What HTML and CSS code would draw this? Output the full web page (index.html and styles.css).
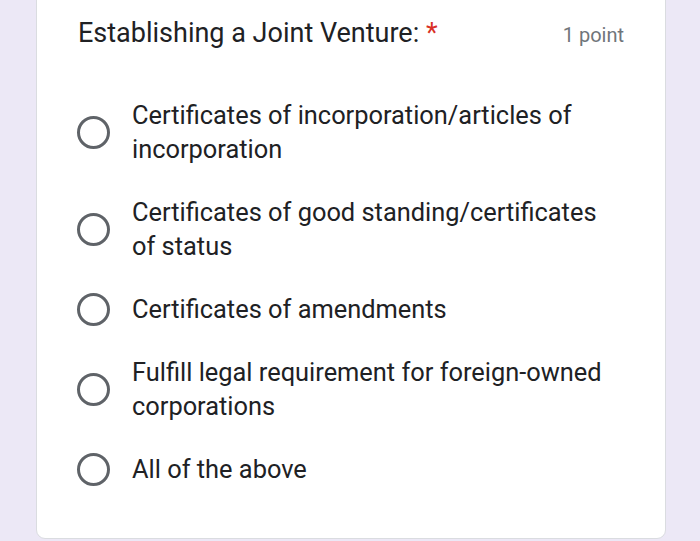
FILE: index.html
```html
<!DOCTYPE html>
<html>
<head>
<meta charset="utf-8">
<link rel="stylesheet" href="styles.css">
</head>
<body>
<div class="card">
  <div class="header">
    <div class="title">Establishing a Joint Venture: <span class="req">*</span></div>
    <div class="points">1 point</div>
  </div>
  <div class="options">
    <div class="option"><span class="radio"></span><span class="label">Certificates of incorporation/articles of incorporation</span></div>
    <div class="option"><span class="radio"></span><span class="label">Certificates of good standing/certificates of status</span></div>
    <div class="option"><span class="radio"></span><span class="label">Certificates of amendments</span></div>
    <div class="option"><span class="radio"></span><span class="label">Fulfill legal requirement for foreign-owned corporations</span></div>
    <div class="option"><span class="radio"></span><span class="label">All of the above</span></div>
  </div>
</div>
</body>
</html>
```

FILE: styles.css
```css
html, body {
  margin: 0;
  padding: 0;
  background: #ece8f6;
  height: 541px;
  overflow: hidden;
}
body {
  font-family: Roboto, "Liberation Sans", sans-serif;
  color: #202124;
}
.card {
  box-sizing: border-box;
  margin: -12px 0 0 36px;
  width: 630px;
  height: 551px;
  background: #fff;
  border: 1px solid #dadce0;
  border-radius: 9px;
  padding: 26px 41px 0 41px;
}
.header {
  display: flex;
  justify-content: space-between;
  align-items: baseline;
}
.title {
  font-size: 27px;
  line-height: 36px;
}
.req {
  color: #d93025;
}
.points {
  font-size: 20px;
  color: #70757a;
}
.options {
  margin-top: 47px;
  display: flex;
  flex-direction: column;
  gap: 29px;
}
.option {
  display: flex;
  align-items: center;
  gap: 22px;
}
.radio {
  flex: none;
  box-sizing: border-box;
  width: 33px;
  height: 33px;
  border: 3px solid #5f6368;
  border-radius: 50%;
  margin-left: -1px;
}
.label {
  font-size: 25.4px;
  line-height: 34px;
  max-width: 480px;
}
```
